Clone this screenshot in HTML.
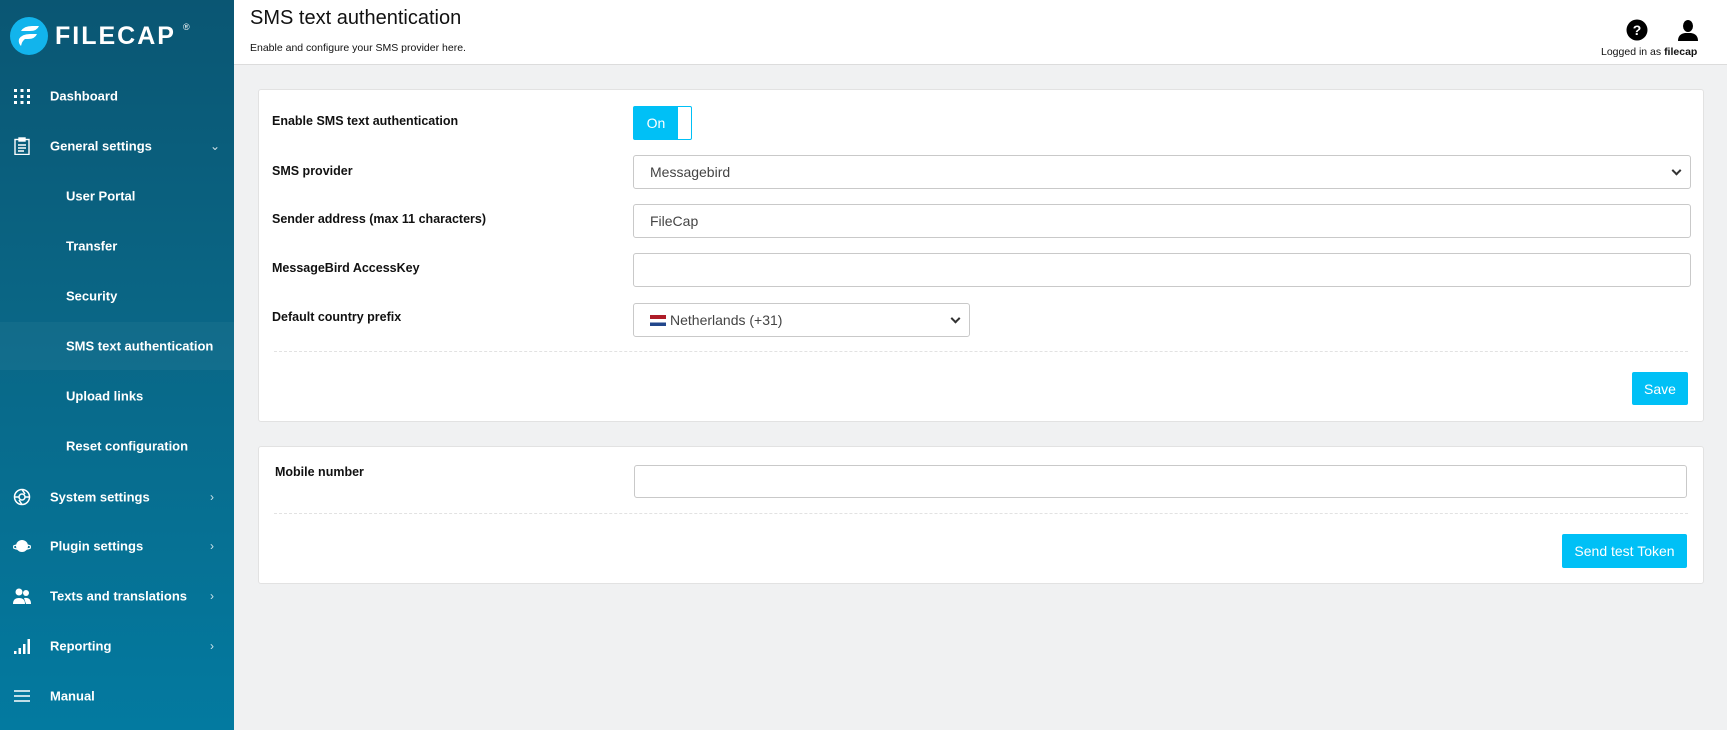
<!DOCTYPE html>
<html><head><meta charset="utf-8"><style>
*{box-sizing:border-box;margin:0;padding:0}
body{width:1727px;height:730px;overflow:hidden;font-family:"Liberation Sans",sans-serif;background:#f0f1f2;position:relative}
.side{position:absolute;left:0;top:0;width:234px;height:730px;background:linear-gradient(180deg,#0a5673 0%,#0a6584 40%,#037aa0 100%);color:#fff}
.logo{position:absolute;left:10px;top:17px;width:38px;height:38px;border-radius:50%;background:#12b4ec}
.logotxt{position:absolute;left:55px;top:22px;font-size:25px;font-weight:bold;letter-spacing:2px;color:#fff}
.reg{position:absolute;left:183px;top:22px;font-size:9px}
.it{position:absolute;left:50px;font-size:13px;font-weight:bold;transform:translateY(-50%)}
.sub{left:66px}
.hl{position:absolute;left:0;top:322px;width:234px;height:48px;background:rgba(255,255,255,0.04)}
.ic{position:absolute;left:13px;width:18px;height:18px;transform:translateY(-50%)}
.chev{position:absolute;left:210px;font-size:12px;transform:translateY(-50%);opacity:.8}
.head{position:absolute;left:234px;top:0;right:0;height:65px;background:#fff;border-bottom:1px solid #dcdcdc}
.title{position:absolute;left:16px;top:7px;font-size:20px;color:#111}
.subt{position:absolute;left:16px;top:42px;font-size:10.5px;color:#111}
.card{position:absolute;background:#fff;border:1px solid #e2e2e2;border-radius:3px}
.lbl{position:absolute;font-size:12.5px;font-weight:bold;color:#111;transform:translateY(-50%)}
.inp{position:absolute;background:#fff;border:1px solid #c9c9c9;border-radius:3px;font-size:14px;color:#444;padding-left:16px;display:flex;align-items:center}
.dash{position:absolute;border-top:1px dashed #e2e2e2}
.btn{position:absolute;background:#00c0f6;color:#fff;font-size:14px;display:flex;align-items:center;justify-content:center;border-radius:2px}
.car{position:absolute;right:10px;top:50%;width:7px;height:7px;border-right:2px solid #333;border-bottom:2px solid #333;transform:translateY(-70%) rotate(45deg)}
</style></head><body>
<div class="side">
<div class="logo"><svg width="38" height="38" viewBox="0 0 38 38"><path d="M11 14 Q14 9 22 9 L29 9 Q27 14 20 14 Z M9 22 Q12 17 20 17 L27 17 Q25 22 18 22 L15 22 Q12 24 11 29 Q8 26 9 22Z" fill="#fff"/></svg></div>
<div class="logotxt">FILECAP</div><div class="reg">®</div>
<div class="hl"></div>
<svg class="ic" style="top:96px" viewBox="0 0 18 18" fill="#fff"><g><rect x="1" y="2" width="3" height="3"/><rect x="7.5" y="2" width="3" height="3"/><rect x="14" y="2" width="3" height="3"/><rect x="1" y="8" width="3" height="3"/><rect x="7.5" y="8" width="3" height="3"/><rect x="14" y="8" width="3" height="3"/><rect x="1" y="14" width="3" height="3"/><rect x="7.5" y="14" width="3" height="3"/><rect x="14" y="14" width="3" height="3"/></g></svg>
<div class="it" style="top:96px">Dashboard</div>
<svg class="ic" style="top:146px" viewBox="0 0 18 18" fill="none" stroke="#fff" stroke-width="1.4"><rect x="2" y="2.5" width="14" height="15"/><rect x="6" y="1" width="6" height="3" fill="#fff"/><path d="M5 8h8M5 11h8M5 14h6"/></svg>
<div class="it" style="top:146px">General settings</div><div class="chev" style="top:146px">⌄</div>
<div class="it sub" style="top:196px">User Portal</div>
<div class="it sub" style="top:246px">Transfer</div>
<div class="it sub" style="top:296px">Security</div>
<div class="it sub" style="top:346px">SMS text authentication</div>
<div class="it sub" style="top:396px">Upload links</div>
<div class="it sub" style="top:446px">Reset configuration</div>
<svg class="ic" style="top:497px" viewBox="0 0 18 18" fill="none" stroke="#fff" stroke-width="1.5"><circle cx="9" cy="9" r="7.5"/><circle cx="9" cy="9" r="3"/><path d="M9 1.5L12 6M16.5 9L12 9M9 16.5L6 12M1.5 9L6 9"/></svg>
<div class="it" style="top:497px">System settings</div><div class="chev" style="top:497px">›</div>
<svg class="ic" style="top:546px" viewBox="0 0 18 18" fill="#fff"><circle cx="9" cy="9" r="6"/><ellipse cx="9" cy="10" rx="9" ry="2.5" fill="none" stroke="#fff" stroke-width="1.3"/></svg>
<div class="it" style="top:546px">Plugin settings</div><div class="chev" style="top:546px">›</div>
<svg class="ic" style="top:596px" viewBox="0 0 18 18" fill="#fff"><circle cx="6" cy="5" r="3.5"/><path d="M0 17q0-6 6-6t6 6z"/><circle cx="13" cy="6" r="3"/><path d="M11 11q7-1 7 6h-5z"/></svg>
<div class="it" style="top:596px">Texts and translations</div><div class="chev" style="top:596px">›</div>
<svg class="ic" style="top:646px" viewBox="0 0 18 18" fill="#fff"><rect x="1" y="14" width="2.5" height="3"/><rect x="5.5" y="11" width="2.5" height="6"/><rect x="10" y="7" width="2.5" height="10"/><rect x="14.5" y="2" width="2.5" height="15"/></svg>
<div class="it" style="top:646px">Reporting</div><div class="chev" style="top:646px">›</div>
<svg class="ic" style="top:696px" viewBox="0 0 18 18" stroke="#fff" stroke-width="1.6"><path d="M1 4h16M1 9h16M1 14h16"/></svg>
<div class="it" style="top:696px">Manual</div>
</div>
<div class="head">
<div class="title">SMS text authentication</div>
<div class="subt">Enable and configure your SMS provider here.</div>
<svg style="position:absolute;left:1392px;top:19px" width="22" height="22" viewBox="0 0 22 22"><circle cx="11" cy="11" r="10.5" fill="#000"/><text x="11" y="16" font-size="14" font-weight="bold" fill="#fff" text-anchor="middle" font-family="Liberation Sans">?</text></svg>
<svg style="position:absolute;left:1443px;top:19px" width="22" height="22" viewBox="0 0 22 22" fill="#000"><ellipse cx="11" cy="7" rx="5" ry="6"/><path d="M1 22q0-7 7-8h6q7 1 7 8z"/></svg>
<div style="position:absolute;left:1367px;top:46px;font-size:10.5px;color:#111">Logged in as <b>filecap</b></div>
</div>
<div class="card" style="left:258px;top:89px;width:1446px;height:333px"></div>
<div class="lbl" style="left:272px;top:121px">Enable SMS text authentication</div>
<div style="position:absolute;left:633px;top:106px;width:59px;height:34px;border:1px solid #00c0f6;border-radius:2px;background:#fff"><div style="width:44px;height:32px;background:#00c0f6;color:#fff;font-size:14px;display:flex;align-items:center;justify-content:center">On</div></div>
<div class="lbl" style="left:272px;top:171px">SMS provider</div>
<div class="inp" style="left:633px;top:155px;width:1058px;height:34px">Messagebird<div class="car"></div></div>
<div class="lbl" style="left:272px;top:219px">Sender address (max 11 characters)</div>
<div class="inp" style="left:633px;top:204px;width:1058px;height:34px">FileCap</div>
<div class="lbl" style="left:272px;top:268px">MessageBird AccessKey</div>
<div class="inp" style="left:633px;top:253px;width:1058px;height:34px"></div>
<div class="lbl" style="left:272px;top:317px">Default country prefix</div>
<div class="inp" style="left:633px;top:303px;width:337px;height:34px"><svg width="16" height="11" style="margin-right:4px"><rect width="16" height="4" fill="#ae1c28"/><rect y="4" width="16" height="3.5" fill="#fff"/><rect y="7.5" width="16" height="3.5" fill="#21468b"/></svg>Netherlands (+31)<div class="car"></div></div>
<div class="dash" style="left:274px;top:351px;width:1414px"></div>
<div class="btn" style="left:1632px;top:372px;width:56px;height:33px">Save</div>
<div class="card" style="left:258px;top:446px;width:1446px;height:138px"></div>
<div class="lbl" style="left:275px;top:472px">Mobile number</div>
<div class="inp" style="left:634px;top:465px;width:1053px;height:33px"></div>
<div class="dash" style="left:274px;top:513px;width:1414px"></div>
<div class="btn" style="left:1562px;top:534px;width:125px;height:34px">Send test Token</div>
</body></html>
